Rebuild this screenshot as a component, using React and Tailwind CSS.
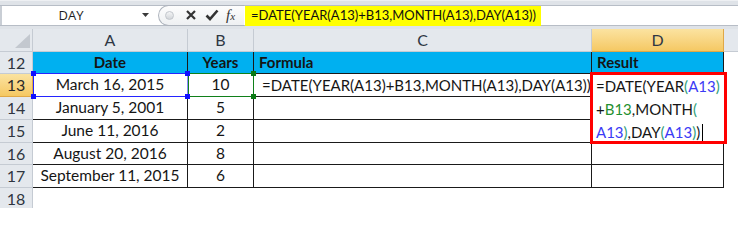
import React from "react";

const rows = [
  { n: "13", a: "March 16, 2015", b: "10", h: "h-[23px]" },
  { n: "14", a: "January 5, 2001", b: "5", h: "h-[23px]" },
  { n: "15", a: "June 11, 2016", b: "2", h: "h-[23px]" },
  { n: "16", a: "August 20, 2016", b: "8", h: "h-[22px]" },
  { n: "17", a: "September 11, 2015", b: "6", h: "h-[23px]" },
];

function Handle({ pos, color }) {
  return <div className={`absolute w-[5px] h-[5px] ${color} ${pos} z-20`} />;
}

function RowHead({ n, active }) {
  return (
    <div
      className={
        active
          ? "w-[33px] shrink-0 flex items-center justify-center border-r border-b border-[#e0a846] bg-gradient-to-b from-[#fbe3a0] to-[#f5c862] text-[#2a2a2a] text-[16px]"
          : "w-[33px] shrink-0 flex items-center justify-center border-r border-b border-[#c5cbd3] bg-[#e4e8ed] text-[#2f3540] text-[16px]"
      }
    >
      {n}
    </div>
  );
}

const P = "text-[#2fa07a]";
const BL = "text-[#3b3bf5]";
const GR = "text-[#1f9030]";

export default function App() {
  return (
    <div className="w-[738px] h-[208px] overflow-hidden bg-white font-['Lato',sans-serif] text-[15px] text-[#151515]">
      {/* formula bar */}
      <div className="h-[29px] bg-[#dfe3e8] pt-[4px] border-t border-[#eef0f3]">
        <div className="h-[21px] bg-white border-t border-b border-[#b7bdc6] flex items-center">
          <div className="w-[158px] shrink-0 h-full flex items-center border-l-2 border-[#c9ced5]">
            <span className="w-[138px] text-center font-['Open_Sans',sans-serif] text-[13px] text-[#1e1e1e]">DAY</span>
            <svg width="8" height="5" viewBox="0 0 8 5" className="ml-[2px]">
              <path d="M0 0 H7 L3.5 4 Z" fill="#3a3a3a" />
            </svg>
          </div>
          <div className="w-[86px] shrink-0 h-[21px] -mt-px rounded-l-full border border-r-0 border-[#aeb4bd] bg-gradient-to-b from-[#fdfdfd] to-[#eef0f2] flex items-center">
            <div className="ml-[6px] w-[9px] h-[9px] rounded-full border border-[#c2c6cc] bg-gradient-to-b from-[#f4f5f6] to-[#d2d5d9]" />
            <svg width="12" height="12" viewBox="0 0 12 12" className="ml-[11px]">
              <path d="M2 2 L10 10 M10 2 L2 10" stroke="#333" strokeWidth="2.2" />
            </svg>
            <svg width="14" height="12" viewBox="0 0 14 12" className="ml-[8px]">
              <path d="M1.5 6.5 L5 10 L12.5 1.5" stroke="#333" strokeWidth="2.6" fill="none" />
            </svg>
            <span className="ml-[7px] font-['Liberation_Serif',serif] italic text-[15px] text-[#333] leading-none">
              f<span className="text-[11px]">x</span>
            </span>
          </div>
          <div className="flex-1 h-full flex items-center">
            <span className="ml-px h-[20px] flex items-center bg-[#ffff00] pl-[6px] pr-[5px] text-[13px] text-[#111]">
              =DATE(YEAR(A13)+B13,MONTH(A13),DAY(A13))
            </span>
          </div>
        </div>
      </div>

      {/* column headers */}
      <div className="flex h-[23px] text-[#2f3744] text-[16px]">
        <div className="w-[33px] shrink-0 border-r border-b border-[#c5cbd3] bg-[#e4e8ed] relative">
          <svg width="16" height="14" viewBox="0 0 16 14" className="absolute right-[2px] bottom-[3px]">
            <path d="M16 0 L16 14 L1 14 Z" fill="#c3c8cf" />
          </svg>
        </div>
        <div className="w-[155px] shrink-0 border-r border-b border-[#c5cbd3] bg-[#e4e8ed] flex items-center justify-center">A</div>
        <div className="w-[66px] shrink-0 border-r border-b border-[#c5cbd3] bg-[#e4e8ed] flex items-center justify-center">B</div>
        <div className="w-[338px] shrink-0 border-r border-b border-[#c5cbd3] bg-[#e4e8ed] flex items-center justify-center">C</div>
        <div className="w-[132px] shrink-0 border-r border-b border-[#e0a846] bg-gradient-to-b from-[#fbe3a0] to-[#f5c862] flex items-center justify-center">D</div>
        <div className="flex-1 border-b border-[#c5cbd3] bg-[#e4e8ed]" />
      </div>

      {/* row 12 */}
      <div className="flex h-[22px]">
        <RowHead n="12" />
        <div className="w-[155px] shrink-0 bg-[#00b0f0] border-r border-b border-[#1a1a1a] flex items-center justify-center font-bold">Date</div>
        <div className="w-[66px] shrink-0 bg-[#00b0f0] border-r border-b border-[#1a1a1a] flex items-center justify-center font-bold">Years</div>
        <div className="w-[338px] shrink-0 bg-[#00b0f0] border-r border-b border-[#1a1a1a] flex items-center pl-[5px] font-bold">Formula</div>
        <div className="w-[132px] shrink-0 bg-[#00b0f0] border-r border-b border-[#1a1a1a] flex items-center pl-[5px] font-bold">Result</div>
        <div className="flex-1" />
      </div>

      {rows.map((r, i) => (
        <div key={r.n} className={`flex ${r.h}`}>
          <RowHead n={r.n} active={i === 0} />
          <div className="w-[155px] shrink-0 border-r border-b border-[#1a1a1a] flex items-center justify-center relative text-[15.5px]">
            {i === 0 && (
              <>
                <div className="absolute left-0 top-[-1px] right-[-1px] bottom-[-1px] border border-[#2424ff] border-r-[#8a8aff] z-10" />
                <Handle color="bg-[#1010ff]" pos="left-[-2px] top-[-3px]" />
                <Handle color="bg-[#1010ff]" pos="left-[-2px] bottom-[-3px]" />
                <Handle color="bg-[#1010ff]" pos="right-[-3px] top-[-3px]" />
                <Handle color="bg-[#1010ff]" pos="right-[-3px] bottom-[-3px]" />
              </>
            )}
            {r.a}
          </div>
          <div className="w-[66px] shrink-0 border-r border-b border-[#1a1a1a] flex items-center justify-center relative text-[15.5px]">
            {i === 0 && (
              <>
                <div className="absolute left-0 top-[-1px] right-[-1px] bottom-[-1px] border border-[#10801a] z-10" />
                <Handle color="bg-[#0a7a14]" pos="right-[-3px] top-[-3px]" />
                <Handle color="bg-[#0a7a14]" pos="right-[-3px] bottom-[-3px]" />
              </>
            )}
            {r.b}
          </div>
          <div className="w-[338px] shrink-0 border-r border-b border-[#1a1a1a] flex items-center pl-[8px] whitespace-nowrap">
            {i === 0 ? "=DATE(YEAR(A13)+B13,MONTH(A13),DAY(A13))" : ""}
          </div>
          <div className="w-[132px] shrink-0 border-r border-b border-[#1a1a1a] relative">
            {i === 0 && (
              <div className="absolute left-[-2px] top-[-2px] w-[137px] h-[72px] border-[3px] border-[#ff0000] bg-white z-30 pl-[3px] leading-[23px] whitespace-nowrap">
                <div>
                  =DATE(YEAR<span className={P}>(</span><span className={BL}>A13</span><span className={P}>)</span>
                </div>
                <div>
                  +<span className={GR}>B13</span>,MONTH<span className={P}>(</span>
                </div>
                <div className="flex items-center">
                  <span className={BL}>A13</span><span className={P}>)</span>,DAY<span className={P}>(</span><span className={BL}>A13</span><span className={P}>)</span>)
                  <span className="inline-block w-px h-[17px] bg-black ml-[2px]" />
                </div>
              </div>
            )}
          </div>
          <div className="flex-1" />
        </div>
      ))}

      {/* row 18 */}
      <div className="flex h-[23px]">
        <RowHead n="18" />
        <div className="flex-1" />
      </div>
    </div>
  );
}
